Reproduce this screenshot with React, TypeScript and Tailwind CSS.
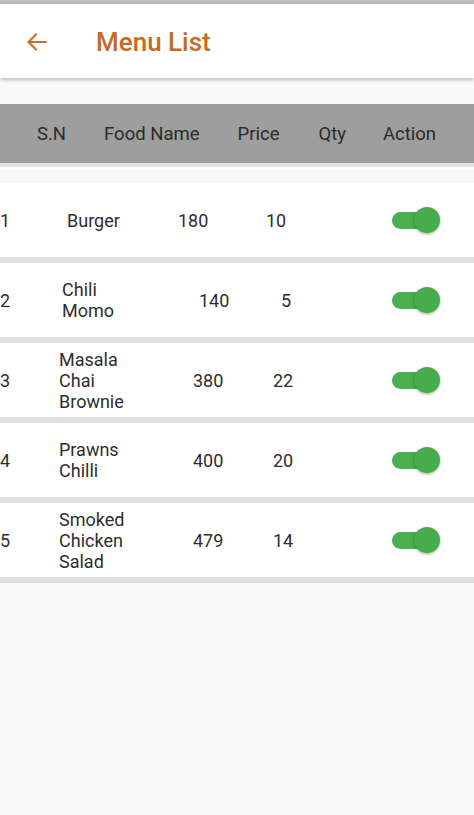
const rows = [
  { sn: '1', name: ['Burger'], price: '180', qty: '10', sn_w: 'w-[67px]', name_w: 'w-[111px]', price_w: 'w-[88px]' },
  { sn: '2', name: ['Chili', 'Momo'], price: '140', qty: '5', sn_w: 'w-[62px]', name_w: 'w-[137px]', price_w: 'w-[82px]' },
  { sn: '3', name: ['Masala', 'Chai', 'Brownie'], price: '380', qty: '22', sn_w: 'w-[59px]', name_w: 'w-[134px]', price_w: 'w-[80px]' },
  { sn: '4', name: ['Prawns', 'Chilli'], price: '400', qty: '20', sn_w: 'w-[59px]', name_w: 'w-[134px]', price_w: 'w-[80px]' },
  { sn: '5', name: ['Smoked', 'Chicken', 'Salad'], price: '479', qty: '14', sn_w: 'w-[59px]', name_w: 'w-[134px]', price_w: 'w-[80px]' },
];

function Toggle() {
  return (
    <div className="relative w-[48px] h-[26px] flex items-center">
      <div className="w-[40px] h-[17px] rounded-full bg-[#4caf50]" />
      <div className="absolute right-0 top-0 w-[26px] h-[26px] rounded-full bg-[#48ab4c] shadow-[0_1px_3px_rgba(0,0,0,0.35)]" />
    </div>
  );
}

export default function App() {
  return (
    <div className="w-[474px] h-[815px] bg-[#fafafa] font-['Roboto',sans-serif] text-[#2e2e2e] overflow-hidden">
      <div className="h-[4px] bg-[#bdbdbd]" />
      <div className="h-[74px] bg-white flex items-center pt-[2px] shadow-[0_2px_4px_rgba(0,0,0,0.25)] relative z-10">
        <svg className="ml-[25px]" width="24" height="24" viewBox="0 0 24 24" fill="none" stroke="#c8702c" strokeWidth="2.2" strokeLinecap="round" strokeLinejoin="round">
          <path d="M21 12H3.5" />
          <path d="M11 4.5L3.5 12l7.5 7.5" />
        </svg>
        <span className="ml-[47px] text-[26px] font-medium text-[#c66a26]">Menu List</span>
      </div>
      <div className="h-[26px]" />
      <div className="h-[59px] bg-[#9e9e9e] flex items-center pt-[3px] text-[18.5px] text-[#2b2b2b]">
        <span className="ml-[37px]">S.N</span>
        <span className="ml-[38px]">Food Name</span>
        <span className="ml-[38px]">Price</span>
        <span className="ml-[39px]">Qty</span>
        <span className="ml-[37px]">Action</span>
      </div>
      <div className="h-[4px] bg-[#e4e4e4]" />
      <div className="h-[3px] bg-white" />
      <div className="h-[13px] bg-[#f7f7f7]" />
      {rows.map((r) => (
        <div key={r.sn}>
          <div className="h-[74px] bg-white flex items-center text-[18px] leading-[21px]">
            <span className={r.sn_w}>{r.sn}</span>
            <div className={`${r.name_w} flex flex-col`}>
              {r.name.map((n) => (
                <span key={n}>{n}</span>
              ))}
            </div>
            <span className={r.price_w}>{r.price}</span>
            <span className="flex-1">{r.qty}</span>
            <div className="mr-[34px]">
              <Toggle />
            </div>
          </div>
          <div className="h-[6px] bg-[#e0e0e0]" />
        </div>
      ))}
    </div>
  );
}
